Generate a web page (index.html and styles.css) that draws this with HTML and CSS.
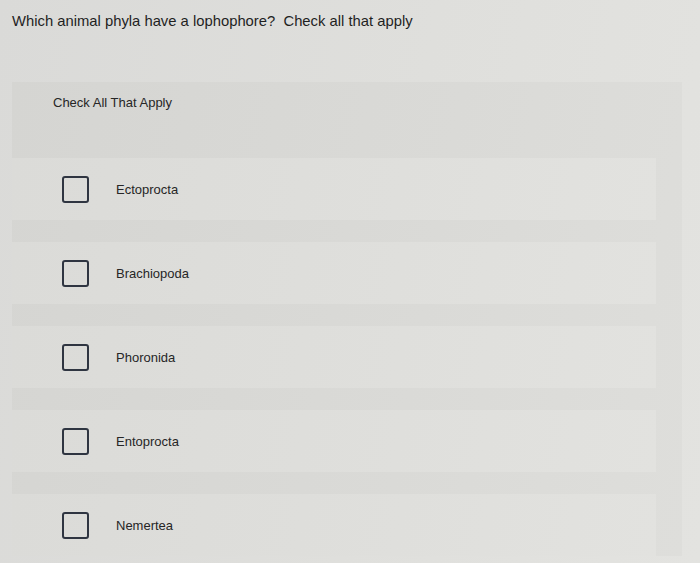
FILE: index.html
```html
<!DOCTYPE html>
<html lang="en">
<head>
    <meta charset="UTF-8">
    <meta name="viewport" content="width=device-width, initial-scale=1.0">
    <title>Lophophore Question</title>
    <link rel="stylesheet" href="styles.css">
</head>
<body>

<p class="question">Which animal phyla have a lophophore?&nbsp; Check all that apply</p>

<div class="answer-panel">
    <div class="panel-header">Check All That Apply</div>

    <div class="choice-list">
        <label class="choice"><span class="box"></span><span class="choice-text">Ectoprocta</span></label>
        <label class="choice"><span class="box"></span><span class="choice-text">Brachiopoda</span></label>
        <label class="choice"><span class="box"></span><span class="choice-text">Phoronida</span></label>
        <label class="choice"><span class="box"></span><span class="choice-text">Entoprocta</span></label>
        <label class="choice"><span class="box"></span><span class="choice-text">Nemertea</span></label>
    </div>
</div>

</body>
</html>
```

FILE: styles.css
```css
body {
    font-family: "Liberation Sans", Arial, sans-serif;
    background: linear-gradient(100deg, #dadad8 0%, #dfdfdc 55%, #e3e3e0 100%);
    color: #1f1f1f;
    margin: 0;
    padding: 12px 18px 0 12px;
    height: 563px;
    box-sizing: border-box;
    overflow: hidden;
}

.question {
    margin: 0;
    font-size: 14.8px;
    line-height: 18px;
}

.answer-panel {
    margin-top: 52px;
    background: linear-gradient(100deg, #d5d5d2 0%, #dadad7 60%, #dededb 100%);
}

.panel-header {
    height: 76px;
    padding: 13px 0 0 41px;
    box-sizing: border-box;
    font-size: 13px;
    color: #262626;
}

.choice-list {
    display: flex;
    flex-direction: column;
    gap: 22px;
    padding-right: 26px;
}

.choice {
    display: flex;
    align-items: center;
    height: 62px;
    padding-left: 50px;
    background: linear-gradient(100deg, #dbdbd8 0%, #dfdfdc 60%, #e2e2df 100%);
    cursor: pointer;
}

.box {
    width: 23px;
    height: 23px;
    border: 2px solid #2f3541;
    border-radius: 3px;
}

.choice-text {
    margin-left: 27px;
    font-size: 13px;
    color: #262626;
}
```
